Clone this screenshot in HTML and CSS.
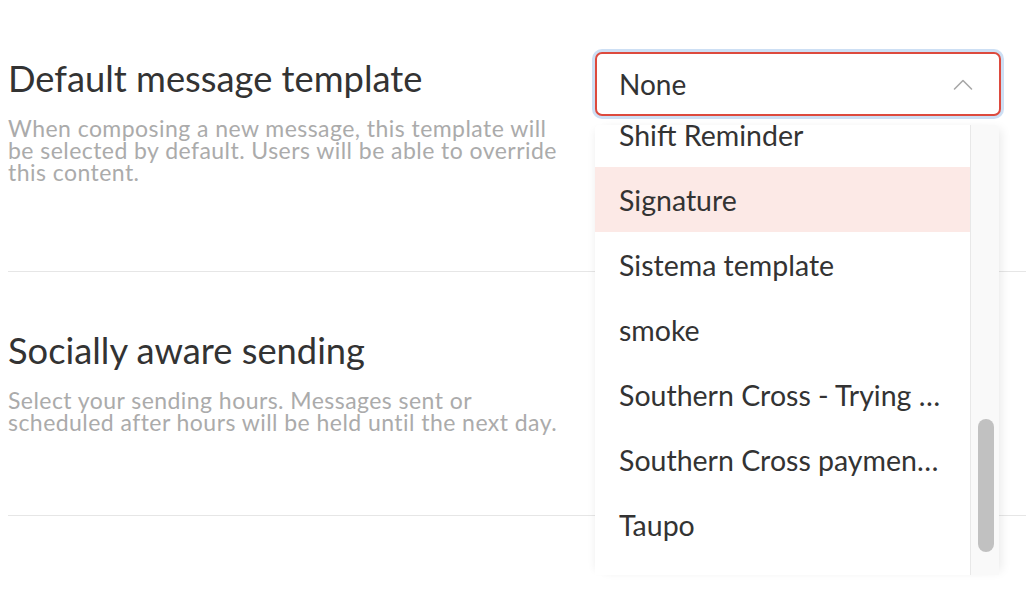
FILE: index.html
```html
<!DOCTYPE html>
<html lang="en">
<head>
<meta charset="utf-8">
<title>Settings</title>
<link rel="stylesheet" href="styles.css">
</head>
<body>
<main class="page">
  <section class="setting setting--template">
    <div class="info">
      <h2 class="title">Default message template</h2>
      <p class="desc">When composing a new message, this template will be selected by default. Users will be able to override this content.</p>
    </div>
    <div class="control">
      <div class="select">
        <span class="select-value">None</span>
        <svg class="chevron" width="20" height="14" viewBox="0 0 20 14" aria-hidden="true">
          <polyline points="1.5,12 10,3.5 18.5,12" fill="none" stroke="#a8a8a8" stroke-width="1.6" stroke-linecap="round" stroke-linejoin="round"/>
        </svg>
      </div>
      <div class="menu">
        <div class="options">
          <ul class="list">
            <li class="option">Shift Reminder</li>
            <li class="option option--active">Signature</li>
            <li class="option">Sistema template</li>
            <li class="option">smoke</li>
            <li class="option">Southern Cross - Trying …</li>
            <li class="option">Southern Cross paymen…</li>
            <li class="option">Taupo</li>
          </ul>
        </div>
        <div class="track"><div class="thumb"></div></div>
      </div>
    </div>
  </section>
  <section class="setting setting--social">
    <div class="info">
      <h2 class="title">Socially aware sending</h2>
      <p class="desc">Select your sending hours. Messages sent or scheduled after hours will be held until the next day.</p>
    </div>
  </section>
</main>
</body>
</html>
```
FILE: styles.css
```css
* { box-sizing: border-box; }
html, body { margin: 0; background: #fff; }
body {
  font-family: Lato, "Open Sans", "Noto Sans", sans-serif;
  color: #333;
  width: 1026px;
  height: 616px;
  overflow: hidden;
}
.page { padding-left: 8px; }
.setting {
  display: flex;
  justify-content: space-between;
  align-items: flex-start;
  border-bottom: 1px solid #e6e6e6;
}
.setting--template { height: 272px; }
.setting--social { height: 244px; }
.info { padding-top: 57px; width: 560px; }
.title {
  margin: 0;
  font-size: 36.3px;
  font-weight: 400;
  line-height: 43px;
  color: #333;
}
.desc {
  margin: 17px 0 0;
  font-size: 23px;
  letter-spacing: 0.45px;
  line-height: 22px;
  color: #ababab;
}
.control {
  position: relative;
  margin-top: 52px;
  margin-right: 25px;
  width: 406px;
}
.select {
  height: 64px;
  border: 2px solid #dd4a3e;
  border-radius: 7px;
  box-shadow: 0 0 0 3px #cddff4;
  display: flex;
  align-items: center;
  justify-content: space-between;
  padding: 0 26px 0 22px;
  background: #fff;
}
.select-value { font-size: 28px; color: #333; }
.chevron { display: block; }
.menu {
  position: absolute;
  top: 73px;
  left: 0;
  width: 404px;
  height: 450px;
  display: flex;
  background: #fff;
  border-radius: 4px 4px 0 0;
  box-shadow: 6px 0 10px -4px rgba(0,0,0,0.09), -5px 0 8px -5px rgba(0,0,0,0.07);
  overflow: hidden;
}
.options { flex: 1; overflow: hidden; }
.list { list-style: none; margin: -23px 0 0; padding: 0; }
.option {
  height: 65px;
  padding: 1px 0 0 24px;
  line-height: 64px;
  font-size: 28.5px;
  color: #333;
  white-space: nowrap;
}
.option--active { background: #fce9e6; }
.track {
  width: 29px;
  background: #f9f9f9;
  border-left: 1px solid #e8e8e8;
  padding: 294px 0 0 7px;
}
.thumb {
  width: 16px;
  height: 133px;
  border-radius: 8px;
  background: #c1c1c1;
}
```
